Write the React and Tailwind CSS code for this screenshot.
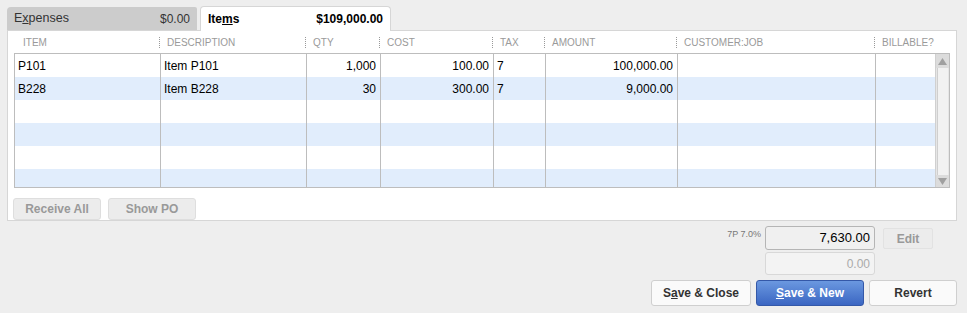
import React from "react";

const cols = [
  { label: "ITEM", w: "w-[145px]" },
  { label: "DESCRIPTION", w: "w-[146px]" },
  { label: "QTY", w: "w-[74px]" },
  { label: "COST", w: "w-[113px]" },
  { label: "TAX", w: "w-[52px]" },
  { label: "AMOUNT", w: "w-[132px]" },
  { label: "CUSTOMER:JOB", w: "w-[198px]" },
  { label: "BILLABLE?", w: "w-[60px]" },
];

const rows = [
  ["P101", "Item P101", "1,000", "100.00", "7", "100,000.00", "", ""],
  ["B228", "Item B228", "30", "300.00", "7", "9,000.00", "", ""],
  ["", "", "", "", "", "", "", ""],
  ["", "", "", "", "", "", "", ""],
  ["", "", "", "", "", "", "", ""],
  ["", "", "", "", "", "", "", ""],
];

const rightAligned = [2, 3, 5];

const App = () => {
  return (
    <div className="w-[967px] h-[313px] bg-[#eeeeee] pt-[6px] pl-[7px] font-['Liberation_Sans',Arial,sans-serif] text-[12px] text-black overflow-hidden">
      {/* Tabs */}
      <div className="flex items-end h-[24px]">
        <div className="w-[190px] h-[23px] bg-[#cccccc] rounded-tl-[4px] rounded-tr-[2px] flex items-center justify-between pl-[7px] pr-[7px] text-[#333]">
          <span className="text-[12.5px]">
            E<span className="underline">x</span>penses
          </span>
          <span>$0.00</span>
        </div>
        <div className="relative z-10 -mb-px ml-[3px] w-[191px] h-[25px] bg-white border border-b-0 border-[#d6d6d6] rounded-t-[4px] flex items-center justify-between pl-[7px] pr-[7px] font-bold">
          <span>
            Ite<span className="underline">m</span>s
          </span>
          <span>$109,000.00</span>
        </div>
      </div>

      {/* Panel */}
      <div className="w-[950px] h-[191px] bg-white border border-[#d6d6d6] px-[6px]">
        {/* Header */}
        <div className="flex h-[22px] items-center text-[10px] text-[#9a9a9a]">
          {cols.map((c, i) => (
            <div key={c.label} className={`${c.w} flex items-center shrink-0 ${i === 0 ? "ml-px" : ""}`}>
              {i > 0 && <div className="h-[11px] border-l border-dotted border-[#999] -ml-px" />}
              <span className={i === 0 ? "pl-[8px]" : "pl-[7px]"}>{c.label}</span>
            </div>
          ))}
        </div>

        {/* Grid */}
        <div className="flex w-[936px] h-[135px] border border-[#bdbdbd]">
          <div className="flex flex-col w-[921px] overflow-hidden">
            {rows.map((r, ri) => (
              <div key={ri} className={`flex h-[23px] shrink-0 ${ri % 2 === 1 ? "bg-[#e1edfc]" : "bg-white"}`}>
                {r.map((v, ci) => (
                  <div
                    key={ci}
                    className={`${cols[ci].w} shrink-0 flex items-center ${ci > 0 ? "border-l border-[#bdbdbd]" : ""} ${
                      rightAligned.includes(ci) ? "justify-end pr-[4px]" : "pl-[3px]"
                    }`}
                  >
                    {v}
                  </div>
                ))}
              </div>
            ))}
          </div>
          {/* Scrollbar */}
          <div className="w-[14px] flex flex-col bg-[#e6e6e6] border-l border-[#d0d0d0]">
            <div className="h-[14px] bg-[#dcdcdc] flex items-center justify-center">
              <svg width="9" height="7" viewBox="0 0 9 7">
                <path d="M4.5 0 L9 7 L0 7 Z" fill="#a0a0a0" />
              </svg>
            </div>
            <div className="flex-1 mx-px bg-[#f2f2f2] border-l border-[#cfcfcf]" />
            <div className="h-[12px] bg-[#dcdcdc] flex items-center justify-center">
              <svg width="9" height="7" viewBox="0 0 9 7">
                <path d="M0 0 L9 0 L4.5 7 Z" fill="#a0a0a0" />
              </svg>
            </div>
          </div>
        </div>

        {/* Panel buttons */}
        <div className="flex gap-[7px] mt-[10px] -ml-px">
          <button className="w-[88px] h-[22px] bg-[#ececec] border border-[#dedede] rounded-[3px] text-[#999] font-bold text-[12px]">
            Receive All
          </button>
          <button className="w-[88px] h-[22px] bg-[#ececec] border border-[#dedede] rounded-[3px] text-[#999] font-bold text-[12px]">
            Show PO
          </button>
        </div>
      </div>

      {/* Totals */}
      <div className="w-[950px] flex flex-col items-end mt-[5px]">
        <div className="flex items-start mr-[24px]">
          <span className="text-[9px] text-[#777] mt-[2px] mr-[4px]">7P 7.0%</span>
          <div className="w-[110px] h-[24px] bg-[#f0f0f0] border border-[#b5b5b5] rounded-[3px] flex items-center justify-end pr-[4px] text-[13px]">
            7,630.00
          </div>
          <button className="ml-[8px] mt-[2px] w-[50px] h-[21px] bg-[#ececec] border border-[#e2e2e2] rounded-[2px] text-[#999] font-bold text-[12px]">
            Edit
          </button>
        </div>
        <div className="mr-[82px] mt-[2px] w-[110px] h-[23px] bg-[#f3f3f3] border border-[#d8d8d8] rounded-[3px] flex items-center justify-end pr-[4px] text-[#aaa]">
          0.00
        </div>
        <div className="flex gap-[5px] mt-[5px]">
          <button className="w-[100px] h-[26px] bg-[#fafafa] border border-[#cfcfcf] rounded-[3px] text-[#333] font-bold text-[12px]">
            S<span className="underline">a</span>ve &amp; Close
          </button>
          <button className="w-[108px] h-[26px] bg-gradient-to-b from-[#6b98e0] to-[#3b66c2] border border-[#3458a8] rounded-[3px] text-white font-bold text-[12px]">
            <span className="underline">S</span>ave &amp; New
          </button>
          <button className="w-[88px] h-[26px] bg-[#fafafa] border border-[#cfcfcf] rounded-[3px] text-[#333] font-bold text-[12px]">
            Revert
          </button>
        </div>
      </div>
    </div>
  );
};

export default App;
